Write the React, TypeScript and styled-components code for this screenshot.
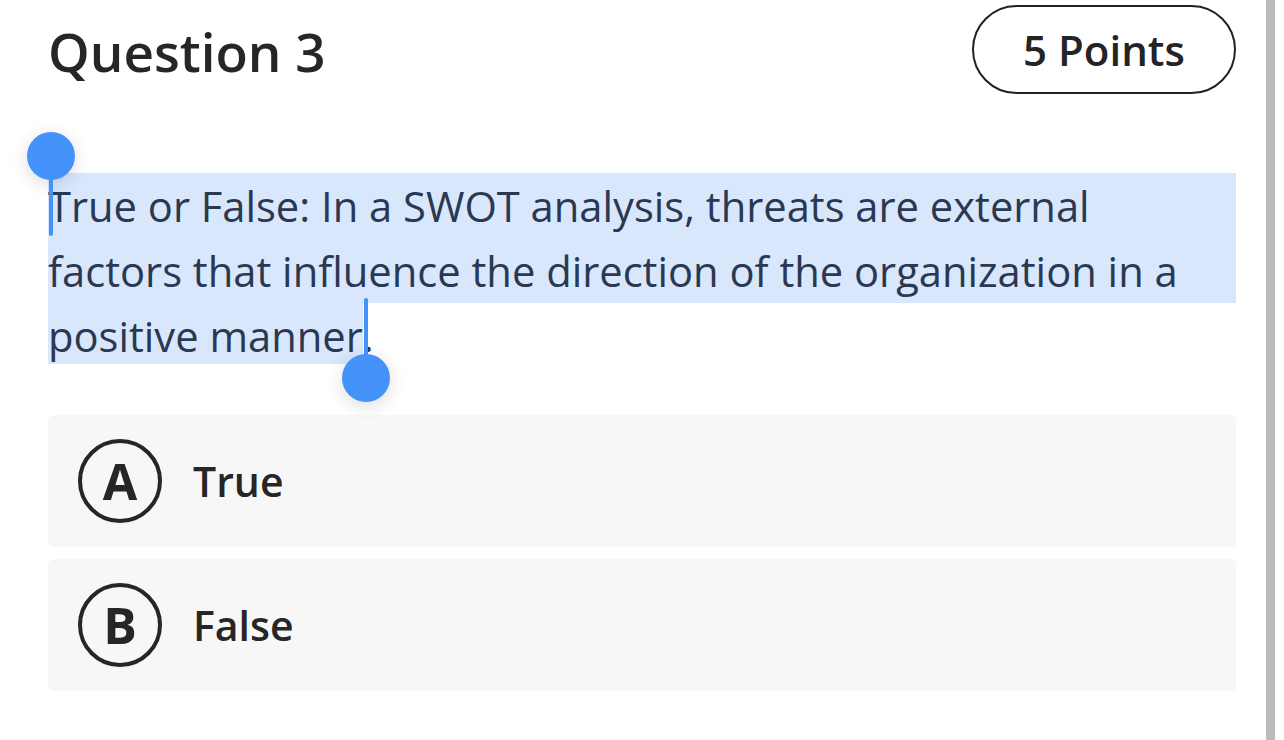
import React from 'react';
import styled, { createGlobalStyle } from 'styled-components';

const GlobalStyle = createGlobalStyle`
  html, body {
    margin: 0;
    padding: 0;
    background: #ffffff;
  }
  body {
    font-family: 'Open Sans', 'Noto Sans', sans-serif;
    -webkit-font-smoothing: antialiased;
  }
`;

const options = [
  { letter: 'A', label: 'True' },
  { letter: 'B', label: 'False' },
];

const App: React.FC = () => {
  return (
    <Page>
      <GlobalStyle />
      <Content>
        <Header>
          <Title>Question 3</Title>
          <PointsPill>5 Points</PointsPill>
        </Header>

        <Prompt>
          <Line selected>True or False: In a SWOT analysis, threats are external</Line>
          <Line selected>factors that influence the direction of the organization in a</Line>
          <Line>
            <Highlight>positive manner</Highlight>.
          </Line>
          <StartHandle>
            <HandleKnob />
            <HandleStem />
          </StartHandle>
          <EndHandle>
            <HandleStem />
            <HandleKnob />
          </EndHandle>
        </Prompt>

        <OptionList>
          {options.map((opt) => (
            <OptionRow key={opt.letter}>
              <LetterBadge>{opt.letter}</LetterBadge>
              <OptionLabel>{opt.label}</OptionLabel>
            </OptionRow>
          ))}
        </OptionList>
      </Content>
      <ScrollTrack>
        <ScrollThumb />
      </ScrollTrack>
    </Page>
  );
};

const Page = styled.div`
  display: flex;
  width: 1284px;
  height: 740px;
  overflow: hidden;
`;

const Content = styled.main`
  width: 1266px;
  box-sizing: border-box;
  padding: 0 30px 0 48px;
`;

const Header = styled.header`
  display: flex;
  justify-content: space-between;
  align-items: center;
  height: 98px;
`;

const Title = styled.h1`
  margin: 4px 0 0 0;
  font-size: 53px;
  font-weight: 600;
  color: #262626;
  letter-spacing: 0;
`;

const PointsPill = styled.div`
  box-sizing: border-box;
  width: 264px;
  height: 89px;
  margin-top: 1px;
  border: 2.5px solid #222;
  border-radius: 45px;
  display: flex;
  align-items: center;
  justify-content: center;
  font-size: 42px;
  font-weight: 600;
  color: #242424;
`;

const Prompt = styled.div`
  position: relative;
  margin-top: 75px;
  font-size: 41.7px;
  color: #2a3851;
`;

const Line = styled.div<{ selected?: boolean }>`
  height: 65px;
  line-height: 65px;
  white-space: nowrap;
  background: ${(p) => (p.selected ? '#d9e7fd' : 'transparent')};
`;

const Highlight = styled.span`
  display: inline-block;
  background: #d9e7fd;
  height: 61px;
`;

const HandleKnob = styled.div`
  width: 48px;
  height: 48px;
  border-radius: 50%;
  background: #4592fb;
  box-shadow: 0 4px 18px rgba(0, 0, 0, 0.14);
`;

const HandleStem = styled.div`
  width: 4px;
  height: 60px;
  border-radius: 2px;
  background: #4592fb;
  margin-top: -4px;
`;

const StartHandle = styled.div`
  position: absolute;
  left: -21px;
  top: -41px;
  display: flex;
  flex-direction: column;
  align-items: center;
`;

const EndHandle = styled.div`
  position: absolute;
  left: 294px;
  top: 125px;
  display: flex;
  flex-direction: column;
  align-items: center;

  ${HandleStem} {
    margin-top: 0;
    margin-bottom: -4px;
  }
`;

const OptionList = styled.div`
  display: flex;
  flex-direction: column;
  gap: 12px;
  margin-top: 47px;
`;

const OptionRow = styled.div`
  display: flex;
  align-items: center;
  gap: 31px;
  height: 132px;
  padding-left: 30px;
  border-radius: 6px;
  background: #f7f7f7;
`;

const LetterBadge = styled.div`
  box-sizing: border-box;
  width: 84px;
  height: 84px;
  border: 4px solid #262626;
  border-radius: 50%;
  display: flex;
  align-items: center;
  justify-content: center;
  font-size: 50px;
  font-weight: 700;
  color: #262626;
`;

const OptionLabel = styled.span`
  font-size: 41px;
  font-weight: 600;
  color: #262626;
`;

const ScrollTrack = styled.div`
  width: 18px;
  height: 100%;
`;

const ScrollThumb = styled.div`
  width: 9px;
  height: 100%;
  background: #bbbbbb;
`;

export default App;
